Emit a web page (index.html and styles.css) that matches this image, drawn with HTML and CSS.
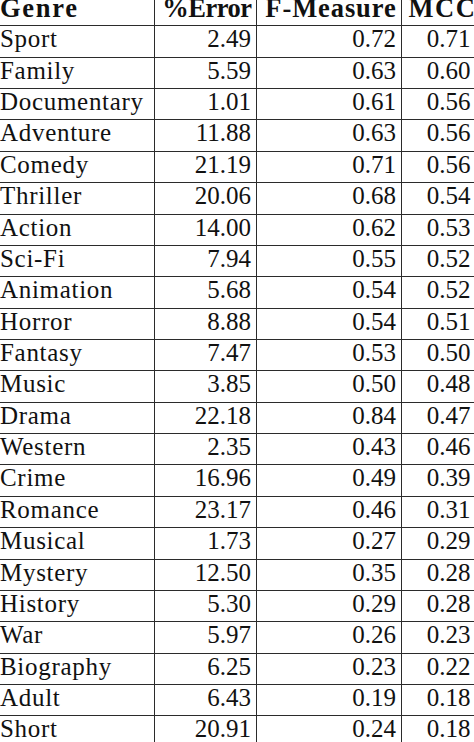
FILE: index.html
```html
<!DOCTYPE html>
<html>
<head>
<meta charset="utf-8">
<link rel="stylesheet" href="styles.css">
</head>
<body>
<div class="table">
  <div class="cell head h-genre">Genre</div><div class="cell head num h-err">%Error</div><div class="cell head num h-fm">F-Measure</div><div class="cell head num last h-mcc">MCC</div>
  <div class="cell name">Sport</div><div class="cell num">2.49</div><div class="cell num">0.72</div><div class="cell num last">0.71</div>
  <div class="cell name">Family</div><div class="cell num">5.59</div><div class="cell num">0.63</div><div class="cell num last">0.60</div>
  <div class="cell name">Documentary</div><div class="cell num">1.01</div><div class="cell num">0.61</div><div class="cell num last">0.56</div>
  <div class="cell name">Adventure</div><div class="cell num">11.88</div><div class="cell num">0.63</div><div class="cell num last">0.56</div>
  <div class="cell name">Comedy</div><div class="cell num">21.19</div><div class="cell num">0.71</div><div class="cell num last">0.56</div>
  <div class="cell name">Thriller</div><div class="cell num">20.06</div><div class="cell num">0.68</div><div class="cell num last">0.54</div>
  <div class="cell name">Action</div><div class="cell num">14.00</div><div class="cell num">0.62</div><div class="cell num last">0.53</div>
  <div class="cell name">Sci-Fi</div><div class="cell num">7.94</div><div class="cell num">0.55</div><div class="cell num last">0.52</div>
  <div class="cell name">Animation</div><div class="cell num">5.68</div><div class="cell num">0.54</div><div class="cell num last">0.52</div>
  <div class="cell name">Horror</div><div class="cell num">8.88</div><div class="cell num">0.54</div><div class="cell num last">0.51</div>
  <div class="cell name">Fantasy</div><div class="cell num">7.47</div><div class="cell num">0.53</div><div class="cell num last">0.50</div>
  <div class="cell name">Music</div><div class="cell num">3.85</div><div class="cell num">0.50</div><div class="cell num last">0.48</div>
  <div class="cell name">Drama</div><div class="cell num">22.18</div><div class="cell num">0.84</div><div class="cell num last">0.47</div>
  <div class="cell name">Western</div><div class="cell num">2.35</div><div class="cell num">0.43</div><div class="cell num last">0.46</div>
  <div class="cell name">Crime</div><div class="cell num">16.96</div><div class="cell num">0.49</div><div class="cell num last">0.39</div>
  <div class="cell name">Romance</div><div class="cell num">23.17</div><div class="cell num">0.46</div><div class="cell num last">0.31</div>
  <div class="cell name">Musical</div><div class="cell num">1.73</div><div class="cell num">0.27</div><div class="cell num last">0.29</div>
  <div class="cell name">Mystery</div><div class="cell num">12.50</div><div class="cell num">0.35</div><div class="cell num last">0.28</div>
  <div class="cell name">History</div><div class="cell num">5.30</div><div class="cell num">0.29</div><div class="cell num last">0.28</div>
  <div class="cell name">War</div><div class="cell num">5.97</div><div class="cell num">0.26</div><div class="cell num last">0.23</div>
  <div class="cell name">Biography</div><div class="cell num">6.25</div><div class="cell num">0.23</div><div class="cell num last">0.22</div>
  <div class="cell name">Adult</div><div class="cell num">6.43</div><div class="cell num">0.19</div><div class="cell num last">0.18</div>
  <div class="cell name">Short</div><div class="cell num">20.91</div><div class="cell num">0.24</div><div class="cell num last">0.18</div>
</div>
</body>
</html>
```
FILE: styles.css
```css
html, body {
  margin: 0;
  padding: 0;
  background: #ffffff;
  overflow: hidden;
}
body {
  width: 474px;
  height: 742px;
}
.table {
  display: grid;
  grid-template-columns: 160.4px 101.2px 145px 80px;
  grid-auto-rows: 31.37px;
  margin-top: -4.97px;
  margin-left: -5px;
  width: 486.6px;
  font-family: "Liberation Serif", "Times New Roman", serif;
  font-size: 25px;
  color: #111111;
}
.cell {
  box-sizing: border-box;
  border-bottom: 1.8px solid #2b2b2b;
  border-right: 1.8px solid #2b2b2b;
  line-height: 25.57px;
  padding-bottom: 4px;
  white-space: nowrap;
  overflow: visible;
}
.name {
  padding-left: 5px;
  letter-spacing: 0.7px;
}
.num {
  text-align: right;
  padding-right: 4.5px;
}
.head {
  font-weight: bold;
  font-size: 26.5px;
  padding-left: 5px;
  padding-bottom: 2.5px;
  line-height: 27.07px;
}
.head.num {
  padding-left: 0;
  padding-right: 4px;
}
.h-genre {
  letter-spacing: 1.7px;
}
.h-err {
  letter-spacing: -0.5px;
}
.h-fm {
  letter-spacing: 0.9px;
}
.head.h-mcc {
  letter-spacing: 1.6px;
  padding-right: 4px;
}
.last {
  padding-right: 10px;
}
```
